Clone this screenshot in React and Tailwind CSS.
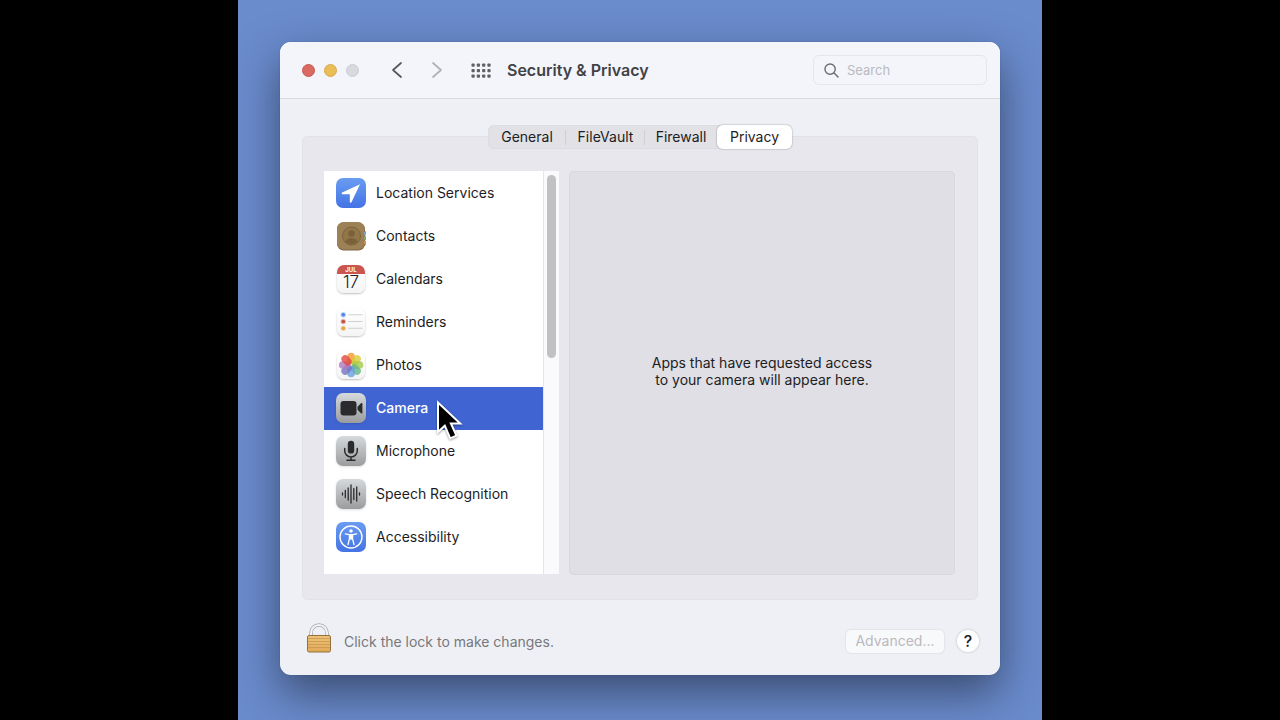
import React, { useState } from "react"
import clsx from "clsx"

const TABS = ["General", "FileVault", "Firewall", "Privacy"]

const PETALS = [
    { angle: 0, color: "#f39a2d" },
    { angle: 45, color: "#dccb3a" },
    { angle: 90, color: "#a5cb4b" },
    { angle: 135, color: "#63b883" },
    { angle: 180, color: "#6c9fe0" },
    { angle: 225, color: "#7272c4" },
    { angle: 270, color: "#b07bbf" },
    { angle: 315, color: "#e2493f" },
]

function LocationIcon() {
    return (
        <svg viewBox="0 0 30 30" className="size-full">
            <path d="M24 6.2 6.2 14.6c-1 .5-.7 1.7.4 1.7h7.2v7.4c0 1.200 1.300 1.400 1.800.4z" fill="#fff" />
        </svg>
    )
}

function ContactsIcon() {
    return (
        <svg viewBox="0 0 30 30" className="size-full">
            <rect x="24" y="10" width="6" height="4.500" rx="1" fill="#7fa3bd" />
            <rect x="24" y="15" width="6" height="4.500" rx="1" fill="#86a765" />
            <rect x="24" y="20" width="6" height="4.500" rx="1" fill="#d08f4b" />
            <rect x="1" y="1.500" width="28" height="28" rx="6.500" fill="#7d6640" />
            <rect x="1" y="1" width="27.500" height="27.500" rx="6.500" fill="#9c8056" />
            <path d="M28 11h2v3h-2z" fill="#7fa3bd" />
            <path d="M28 15.500h2v3h-2z" fill="#86a765" />
            <path d="M28 20h2v3h-2z" fill="#d08f4b" />
            <circle cx="15.500" cy="15" r="9" fill="#927649" stroke="#7c633c" strokeWidth="1" />
            <circle cx="15.500" cy="12.500" r="3.300" fill="#7a613a" />
            <path d="M9.300 20.800c1.300-2.900 3.600-3.900 6.200-3.900s4.900 1 6.200 3.900a9 9 0 0 1-12.400 0z" fill="#7a613a" />
        </svg>
    )
}

function CalendarIcon() {
    return (
        <span className="flex size-full flex-col overflow-hidden text-center">
            <span className="h-[9px] bg-[#cb564e] text-[6px] leading-[9px] font-bold text-white">JUL</span>
            <span className="text-[17px] leading-[17px] font-light text-[#222]">17</span>
        </span>
    )
}

function RemindersIcon() {
    return (
        <svg viewBox="0 0 28 29" className="size-full">
            {["#4f83e8", "#c4524b", "#e5a544"].map((color, i) => (
                <g key={color}>
                    <circle cx="6" cy={7 + i * 7} r="2.900" fill={color} opacity="0.35" />
                    <circle cx="6" cy={7 + i * 7} r="1.900" fill={color} />
                    <path d={`M11 ${7 + i * 7}h15`} stroke="#cfcfd1" strokeWidth="1" />
                </g>
            ))}
        </svg>
    )
}

function PhotosIcon() {
    return (
        <svg viewBox="0 0 28 28" className="size-full">
            {PETALS.map((p) => (
                <rect
                    key={p.angle}
                    x="10.300"
                    y="1.800"
                    width="7.600"
                    height="11.400"
                    rx="3.800"
                    fill={p.color}
                    opacity="0.8"
                    transform={`rotate(${p.angle} 14.100 14)`}
                />
            ))}
        </svg>
    )
}

function CameraIcon() {
    return (
        <svg viewBox="0 0 30 30" className="size-full" fill="#2b2b2d">
            <rect x="4.500" y="8" width="16" height="14.500" rx="3" />
            <path d="M21.500 13.800 25 10.300c.7-.7 1.400-.4 1.400.5v8.900c0 .9-.7 1.200-1.400.5l-3.500-3.500z" />
        </svg>
    )
}

function MicrophoneIcon() {
    return (
        <svg viewBox="0 0 30 30" className="size-full" fill="none" stroke="#2b2b2d" strokeWidth="1.500" strokeLinecap="round">
            <rect x="11.800" y="4.800" width="6.400" height="12.800" rx="3.200" fill="#2b2b2d" stroke="none" />
            <path d="M8.700 12.500v2.200a6.300 6.300 0 0 0 12.600 0v-2.200M15 21v3.300M11 24.300h8" />
        </svg>
    )
}

function SpeechIcon() {
    return (
        <svg viewBox="0 0 30 30" className="size-full" stroke="#2b2b2d" strokeWidth="1.300" strokeLinecap="round">
            <path d="M6.500 14v2M9.300 11.500v7M12.200 9v12M15 6v18M17.800 9.500v11M20.700 8v14M23.500 14v2" />
        </svg>
    )
}

function AccessibilityIcon() {
    return (
        <svg viewBox="0 0 30 30" className="size-full">
            <circle cx="15" cy="15" r="11" fill="none" stroke="#fff" strokeWidth="1.400" />
            <circle cx="15" cy="9" r="1.800" fill="#fff" />
            <path
                d="M9.300 11.900 13.400 12.700v4.100L12 22.500M20.700 11.900 16.600 12.700v4.100L18 22.500M13.400 12.700h3.200M13.600 16.500h2.800"
                fill="none"
                stroke="#fff"
                strokeWidth="1.300"
                strokeLinecap="round"
                strokeLinejoin="round"
            />
            <path d="M13.200 12.400h3.600v5h-3.600z" fill="#fff" />
        </svg>
    )
}

const BLUE = "size-[30px] bg-linear-to-b from-[#6a9cf2] to-[#4473e4]"
const GRAY = "size-[30px] bg-linear-to-b from-[#d6dadd] to-[#9b9c9d] shadow-sm"
const WHITE = "size-7 bg-linear-to-b from-white to-[#f4f4f4] shadow-[0_1px_2px_rgba(0,0,0,0.25)]"

const SERVICES = [
    { name: "Location Services", Icon: LocationIcon, tile: BLUE },
    { name: "Contacts", Icon: ContactsIcon, tile: "size-[30px]" },
    { name: "Calendars", Icon: CalendarIcon, tile: WHITE },
    { name: "Reminders", Icon: RemindersIcon, tile: WHITE },
    { name: "Photos", Icon: PhotosIcon, tile: WHITE },
    { name: "Camera", Icon: CameraIcon, tile: GRAY },
    { name: "Microphone", Icon: MicrophoneIcon, tile: GRAY },
    { name: "Speech Recognition", Icon: SpeechIcon, tile: GRAY },
    { name: "Accessibility", Icon: AccessibilityIcon, tile: BLUE },
]

function Pointer() {
    return (
        <svg viewBox="0 0 28 42" className="pointer-events-none absolute top-3 left-28 z-10 h-[42px] w-7 drop-shadow-[0_1px_1px_rgba(0,0,0,0.4)]">
            <path
                d="M2 3.500V33l6.800-6.300 5.400 12.600 6.200-2.700-5.500-12.200h9.300z"
                fill="#000"
                stroke="#fff"
                strokeWidth="2"
                strokeLinejoin="miter"
            />
        </svg>
    )
}

function LockIcon() {
    return (
        <svg viewBox="0 0 26 30" className="h-[30px] w-[26px]">
            <defs>
                <linearGradient id="brass" x1="0" y1="0" x2="0" y2="1">
                    <stop offset="0" stopColor="#eec277" />
                    <stop offset="1" stopColor="#dfa956" />
                </linearGradient>
            </defs>
            <path d="M5 14V10a8 8 0 0 1 16 0v4" fill="none" stroke="#a5a8ac" strokeWidth="3.600" />
            <path d="M5 14V10a8 8 0 0 1 16 0v4" fill="none" stroke="#f1f2f4" strokeWidth="2.200" />
            <rect x="1.500" y="12.500" width="23" height="16.500" rx="1.500" fill="url(#brass)" stroke="#94713f" strokeWidth="1" />
            <path d="M2 15.500h22M2 18.500h22M2 21.500h22M2 24.500h22" stroke="#c4954f" strokeWidth="0.700" />
        </svg>
    )
}

function TitleBar() {
    return (
        <header className="flex h-[57px] items-center border-b border-[#dadbdf] bg-[#f4f5fa] pr-[13px] pl-[22px]">
            <div className="flex gap-[9px]">
                <button aria-label="Close" className="size-[13px] rounded-full border border-[#c9574f] bg-[#d96a61]" />
                <button aria-label="Minimize" className="size-[13px] rounded-full border border-[#dba94a] bg-[#e9bd57]" />
                <button aria-label="Zoom" className="size-[13px] rounded-full border border-[#cdced3] bg-[#d8d9dd]" />
            </div>
            <div className="ml-8 flex gap-7">
                <button aria-label="Back" className="text-[#55565a]">
                    <svg viewBox="0 0 12 18" className="h-[18px] w-3" fill="none" stroke="currentColor" strokeWidth="1.700" strokeLinecap="round" strokeLinejoin="round">
                        <path d="M10 2 2 9l8 7" />
                    </svg>
                </button>
                <button aria-label="Forward" className="text-[#b0b1b5]">
                    <svg viewBox="0 0 12 18" className="h-[18px] w-3" fill="none" stroke="currentColor" strokeWidth="1.700" strokeLinecap="round" strokeLinejoin="round">
                        <path d="m2 2 8 7-8 7" />
                    </svg>
                </button>
            </div>
            <button aria-label="Show All" className="ml-7">
                <svg viewBox="0 0 20 15" className="h-[15px] w-5" fill="#606165">
                    {[0, 1, 2].map((row) =>
                        [0, 1, 2, 3].map((col) => (
                            <rect key={`${row}-${col}`} x={0.5 + col * 5.3} y={0.5 + row * 5.5} width="3.200" height="3.200" rx="0.800" />
                        ))
                    )}
                </svg>
            </button>
            <h1 className="ml-4 text-base font-semibold text-[#414246]">Security &amp; Privacy</h1>
            <label className="ml-auto flex h-[30px] w-[174px] items-center gap-2 rounded-md border border-[#e5e6ea] pl-[10px]">
                <svg viewBox="0 0 16 16" className="size-[15px] shrink-0" fill="none" stroke="#6b6c70" strokeWidth="1.500" strokeLinecap="round">
                    <circle cx="6.500" cy="6.500" r="5.500" />
                    <path d="m10.700 10.700 4.300 4.300" />
                </svg>
                <input type="text" aria-label="Search" placeholder="Search" className="w-full min-w-0 bg-transparent pt-0.5 text-[13px] outline-none placeholder:text-[#b9bac0]" />
            </label>
        </header>
    )
}

function Tabs({ active, onChange }) {
    return (
        <div
            role="tablist"
            className="relative z-10 mx-auto -mb-[13px] grid h-6 w-[304px] grid-cols-[78px_79px_72px_75px] rounded-md bg-[#e1e1e6] ring-1 ring-[#dcdce1] ring-inset"
        >
            {TABS.map((tab, i) => (
                <button
                    key={tab}
                    role="tab"
                    aria-selected={tab === active}
                    onClick={() => onChange(tab)}
                    className={clsx(
                        "relative pb-px text-center text-sm leading-[22px]",
                        tab === active && "rounded-md bg-white shadow-[0_0_1px_1px_rgba(0,0,0,0.12)]"
                    )}
                >
                    {i > 0 && i < 3 && <span className="absolute top-[5px] -left-px h-[15px] w-px bg-[#cfcfd4]" />}
                    {tab}
                </button>
            ))}
        </div>
    )
}

function ServiceList({ selected, onSelect }) {
    return (
        <div className="mb-px flex w-[235px] shrink-0 bg-white">
            <ul className="grow pt-px">
                {SERVICES.map(({ name, Icon, tile }) => (
                    <li key={name} className="relative">
                        <button
                            onClick={() => onSelect(name)}
                            className={clsx(
                                "flex h-[43px] w-full items-center gap-[10px] pb-0.5 pl-3 text-left text-sm",
                                name === selected && "bg-[#4065d3] font-medium text-white"
                            )}
                        >
                            <span className="flex size-[30px] shrink-0 items-center justify-center">
                                <span className={clsx("block overflow-hidden rounded-[7px]", tile)}>
                                    <Icon />
                                </span>
                            </span>
                            {name}
                        </button>
                        {name === "Camera" && <Pointer />}
                    </li>
                ))}
            </ul>
            <div className="w-4 border-l border-[#e6e6e9] bg-[#fafafc] px-[3px] pt-1">
                <div className="h-[183px] w-[9px] rounded-full bg-[#c1c1c3]" />
            </div>
        </div>
    )
}

export default function App() {
    const [tab, setTab] = useState("Privacy")
    const [service, setService] = useState("Camera")

    return (
        <div className="min-h-screen bg-black font-['Inter','Liberation_Sans',sans-serif] text-[#1d1d1f]">
            <div className="mx-auto min-h-screen max-w-[804px] overflow-hidden bg-[#6a8bcc] p-[42px]">
                <div className="rounded-[11px] shadow-[0_0_1px_rgba(0,0,0,0.4),0_18px_44px_rgba(20,25,40,0.55)]">
                    <div className="overflow-hidden rounded-[11px] bg-[#eff0f5]">
                        <TitleBar />
                        <main className="px-[22px] pt-[26px]">
                            <Tabs active={tab} onChange={setTab} />
                            <section className="flex gap-[10px] rounded-[5px] border border-[#e1e1e6] bg-[#e8e7ed] pt-[34px] pr-[22px] pb-6 pl-[21px]">
                                <ServiceList selected={service} onSelect={setService} />
                                <div className="flex h-[404px] grow items-center justify-center rounded-[4px] border border-[#d9d8de] bg-[#e0dfe5] pb-1">
                                    <p className="text-center text-sm leading-[17px]">
                                        Apps that have requested access
                                        <br />
                                        to your camera will appear here.
                                    </p>
                                </div>
                            </section>
                        </main>
                        <footer className="flex h-[75px] items-center px-[21px] pt-1 pb-1">
                            <button aria-label="Unlock" className="ml-[5px]">
                                <LockIcon />
                            </button>
                            <p className="ml-3 pt-2 text-sm text-[#77787c]">Click the lock to make changes.</p>
                            <button disabled className="mt-[7px] ml-auto h-[23px] w-[98px] rounded-[5px] bg-[#f8f9fb] text-sm leading-[22px] text-[#b9babd] shadow-[0_0_1px_1px_rgba(0,0,0,0.05)]">
                                Advanced...
                            </button>
                            <button aria-label="Help" className="mt-[7px] ml-[13px] size-[22px] rounded-full bg-white text-base leading-[22px] font-medium shadow-[0_0_2px_1px_rgba(0,0,0,0.1)]">
                                ?
                            </button>
                        </footer>
                    </div>
                </div>
            </div>
        </div>
    )
}
